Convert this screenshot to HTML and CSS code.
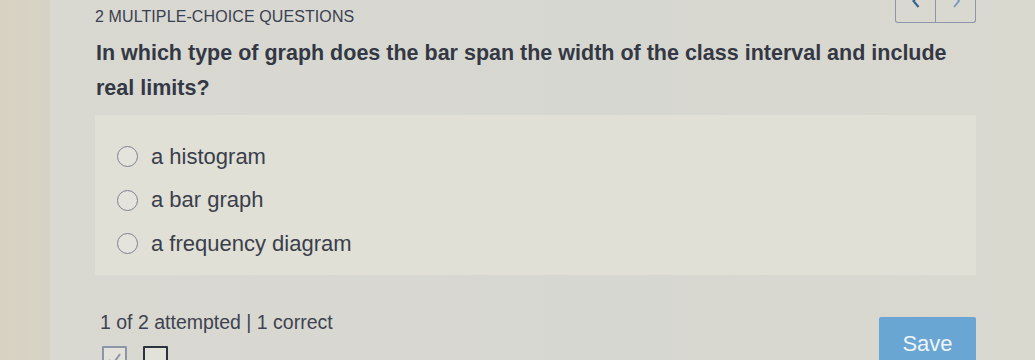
FILE: index.html
```html
<!DOCTYPE html>
<html>
<head>
<meta charset="utf-8">
<link rel="stylesheet" href="styles.css">
</head>
<body>
<div class="screen">
  <div class="edge"></div>
  <div class="main">
    <div class="header">
      <div class="title">2 MULTIPLE-CHOICE QUESTIONS</div>
      <div class="nav">
        <div class="navbtn"><svg width="12" height="16" viewBox="0 0 12 16"><path d="M8.5 2 L3.5 8 L8.5 14" fill="none" stroke="#3a6590" stroke-width="2.2"/></svg></div>
        <div class="navbtn"><svg width="12" height="16" viewBox="0 0 12 16"><path d="M4 2 L9 8 L4 14" fill="none" stroke="#7399c0" stroke-width="1.8"/></svg></div>
      </div>
    </div>
    <div class="question">In which type of graph does the bar span the width of the class interval and include real limits?</div>
    <div class="panel">
      <div class="option"><span class="radio"></span><span>a histogram</span></div>
      <div class="option"><span class="radio"></span><span>a bar graph</span></div>
      <div class="option"><span class="radio"></span><span>a frequency diagram</span></div>
    </div>
    <div class="footer">
      <div class="status">
        <div class="attempts">1 of 2 attempted | 1 correct</div>
        <div class="boxes">
          <span class="box checked"><svg width="21" height="21" viewBox="0 0 21 21"><path d="M5 12 L9 16 L16 6" fill="none" stroke="#8c96a8" stroke-width="2"/></svg></span>
          <span class="box"></span>
        </div>
      </div>
      <button class="save">Save</button>
    </div>
  </div>
</div>
</body>
</html>
```
FILE: styles.css
```css
html, body {
  margin: 0;
  padding: 0;
}
body {
  width: 1035px;
  height: 360px;
  overflow: hidden;
  font-family: "Liberation Sans", Arial, sans-serif;
  color: #3a3e4a;
}
.screen {
  display: flex;
  width: 1035px;
  height: 360px;
  background: linear-gradient(90deg, #d9d9d2 0%, #d6d7d0 60%, #dad9d0 100%);
}
.edge {
  width: 50px;
  flex: none;
  background: linear-gradient(90deg, #d8d2c2, #d6d3c6);
}
.main {
  flex: 1;
  padding-left: 45px;
  padding-right: 59px;
  display: flex;
  flex-direction: column;
}
.main > * {
  flex: none;
}
.header {
  display: flex;
  justify-content: space-between;
  align-items: flex-start;
  height: 30px;
}
.title {
  margin-top: 8px;
  font-size: 16px;
  letter-spacing: 0.1px;
  color: #3b4050;
}
.nav {
  display: flex;
  margin-top: -2px;
  border: 1px solid #8d96a8;
  border-top: none;
  border-radius: 0 0 3px 3px;
  height: 24px;
}
.navbtn {
  width: 39px;
  display: flex;
  justify-content: center;
  align-items: flex-start;
  margin-top: -5px;
}
.navbtn + .navbtn {
  border-left: 1px solid #8d96a8;
}
.question {
  margin-top: 6px;
  font-size: 21.5px;
  font-weight: bold;
  line-height: 35px;
  color: #343844;
  width: 880px;
  padding-left: 1px;
}
.panel {
  margin-top: 9px;
  height: 160px;
  box-sizing: border-box;
  background: #e0e0d7;
  display: flex;
  flex-direction: column;
  gap: 18.5px;
  padding-top: 29px;
  padding-left: 22px;
}
.option {
  display: flex;
  align-items: center;
  gap: 13px;
  font-size: 22px;
  height: 25px;
  color: #3a3e4a;
}
.radio {
  width: 19px;
  height: 19px;
  border: 1.6px solid #7b8190;
  border-radius: 50%;
  background: #e4e4dc;
}
.footer {
  display: flex;
  justify-content: space-between;
  margin-top: 36px;
}
.status {
  padding-left: 5px;
}
.attempts {
  font-size: 19.5px;
  line-height: 22px;
  color: #3e4250;
}
.boxes {
  display: flex;
  gap: 16px;
  margin-top: 13px;
  padding-left: 2px;
}
.box {
  width: 25px;
  height: 25px;
  border: 2px solid #2d3240;
  box-sizing: border-box;
  border-radius: 1px;
  background: #e2e2da;
  display: flex;
}
.box.checked {
  border-color: #8c96a8;
}
.save {
  margin-top: 6px;
  width: 97px;
  height: 50px;
  border: none;
  border-radius: 2px;
  background: #6aa6d4;
  color: #eef4f8;
  font-family: "Liberation Sans", Arial, sans-serif;
  font-size: 22px;
  padding-top: 4px;
}
```
